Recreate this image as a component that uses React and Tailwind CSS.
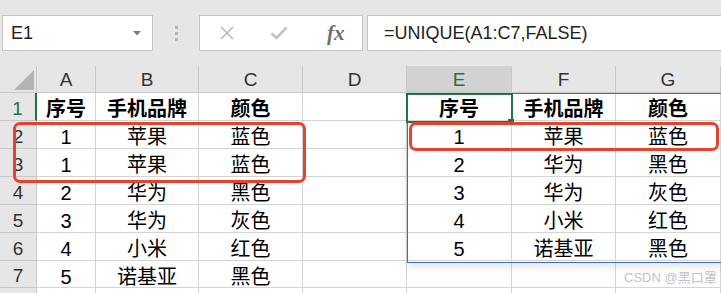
import React from "react";

const cols = ["A", "B", "C", "D", "E", "F", "G"];
const rows = [
  { n: 1, cells: ["序号", "手机品牌", "颜色", "", "序号", "手机品牌", "颜色"], bold: true },
  { n: 2, cells: ["1", "苹果", "蓝色", "", "1", "苹果", "蓝色"] },
  { n: 3, cells: ["1", "苹果", "蓝色", "", "2", "华为", "黑色"] },
  { n: 4, cells: ["2", "华为", "黑色", "", "3", "华为", "灰色"] },
  { n: 5, cells: ["3", "华为", "灰色", "", "4", "小米", "红色"] },
  { n: 6, cells: ["4", "小米", "红色", "", "5", "诺基亚", "黑色"] },
  { n: 7, cells: ["5", "诺基亚", "黑色", "", "", "", ""] },
  { n: "", cells: ["", "", "", "", "", "", ""] },
];

export default function App() {
  return (
    <div className="relative w-[721px] h-[293px] overflow-hidden bg-[#e6e6e6] font-['Liberation_Sans','Noto_Sans_CJK_SC',sans-serif] text-black">
      {/* formula bar */}
      <div className="h-[66px] pt-[15px] flex items-start">
        <div className="ml-[2px] w-[151px] h-[36px] bg-white border border-[#c6c6c6] flex items-center pl-[8px] pr-[11px] justify-between">
          <span className="text-[18px] text-[#222]">E1</span>
          <svg width="8" height="5" viewBox="0 0 8 5"><path d="M0 0H8L4 4.5Z" fill="#7a7a7a" /></svg>
        </div>
        <div className="w-[46px] h-[36px] flex flex-col items-center justify-center gap-[3px]">
          <div className="w-[3px] h-[3px] bg-[#b5b5b5]" />
          <div className="w-[3px] h-[3px] bg-[#b5b5b5]" />
          <div className="w-[3px] h-[3px] bg-[#b5b5b5]" />
        </div>
        <div className="w-[164px] h-[36px] bg-white border border-[#c6c6c6] flex items-center">
          <svg className="ml-[19px]" width="16" height="16" viewBox="0 0 16 16"><path d="M2 2L14 14M14 2L2 14" stroke="#b9b9b9" strokeWidth="1.6" /></svg>
          <svg className="ml-[35px]" width="18" height="14" viewBox="0 0 18 14"><path d="M1.5 7.5L6.5 12L16.5 1.5" stroke="#c4c4c4" strokeWidth="2.6" fill="none" /></svg>
          <span className="ml-[39px] font-['Liberation_Serif',serif] italic text-[21px] text-[#6f6f6f] font-bold leading-none">fx</span>
        </div>
        <div className="ml-[4px] flex-1 h-[36px] bg-white border border-[#c6c6c6] border-r-0 flex items-center pl-[16px]">
          <span className="text-[18px] text-[#222] font-['Liberation_Sans',sans-serif]">=UNIQUE(A1:C7,FALSE)</span>
        </div>
      </div>

      {/* grid */}
      <div className="grid grid-cols-[37px_59px_103px_104px_104px_105px_104px_1fr] grid-rows-[27px_repeat(6,28px)_27px_28px] bg-white">
        <div className="relative bg-[#e6e6e6] border-r border-b border-[#c8c8c8]">
          <svg className="absolute left-[14px] top-[4px]" width="20" height="20" viewBox="0 0 20 20"><path d="M20 0V20H0Z" fill="#b4b4b4" /></svg>
        </div>
        {cols.map((c) => (
          <div
            key={c}
            className={
              c === "E"
                ? "flex items-center justify-center pt-[3px] text-[19px] bg-[#d2d2d2] text-[#217346] border-r border-b border-[#c8c8c8]"
                : "flex items-center justify-center pt-[3px] text-[19px] bg-[#e6e6e6] text-[#333] border-r border-b border-[#c8c8c8]"
            }
          >
            {c}
          </div>
        ))}
        {rows.map((r, ri) => (
          <React.Fragment key={ri}>
            <div
              className={
                r.n === 1
                  ? "flex items-center justify-center pt-[5px] text-[19px] bg-[#e6e6e6] text-[#217346] border-r-2 border-r-[#217346] border-b border-b-[#c8c8c8]"
                  : "flex items-center justify-center pt-[5px] text-[19px] bg-[#e6e6e6] text-[#333] border-r border-b border-[#c8c8c8]"
              }
            >
              {r.n}
            </div>
            {r.cells.map((t, i) => (
              <div
                key={i}
                className={
                  r.bold
                    ? "flex items-center justify-center pt-[5px] text-[20px] font-bold border-r border-b border-[#d4d4d4] whitespace-nowrap"
                    : "flex items-center justify-center pt-[5px] text-[20px] border-r border-b border-[#d4d4d4] whitespace-nowrap"
                }
              >
                {t}
              </div>
            ))}
          </React.Fragment>
        ))}
      </div>

      {/* spill range */}
      <div className="absolute left-[407px] top-[93px] w-[330px] h-[170px] border border-[#3e6fc6] shadow-[0_4px_8px_rgba(0,0,0,0.10)]" />
      {/* active cell */}
      <div className="absolute left-[406px] top-[93px] w-[107px] h-[30px] border-2 border-[#217346]" />
      <div className="absolute left-[508px] top-[119px] w-[6px] h-[5px] bg-[#217346]" />

      {/* red highlights */}
      <div className="absolute left-[13px] top-[122px] w-[293px] h-[61px] border-[3px] border-[#e5432d] rounded-[7px]" />
      <div className="absolute left-[409px] top-[122px] w-[310px] h-[29px] border-[3px] border-[#e5432d] rounded-[7px]" />

      {/* watermark */}
      <div className="absolute left-[624px] top-[271px] text-[13px] leading-none text-[#c2c2c2] font-['Liberation_Sans','Noto_Sans_CJK_SC',sans-serif] whitespace-nowrap">
        CSDN @黑口罩
      </div>
    </div>
  );
}
